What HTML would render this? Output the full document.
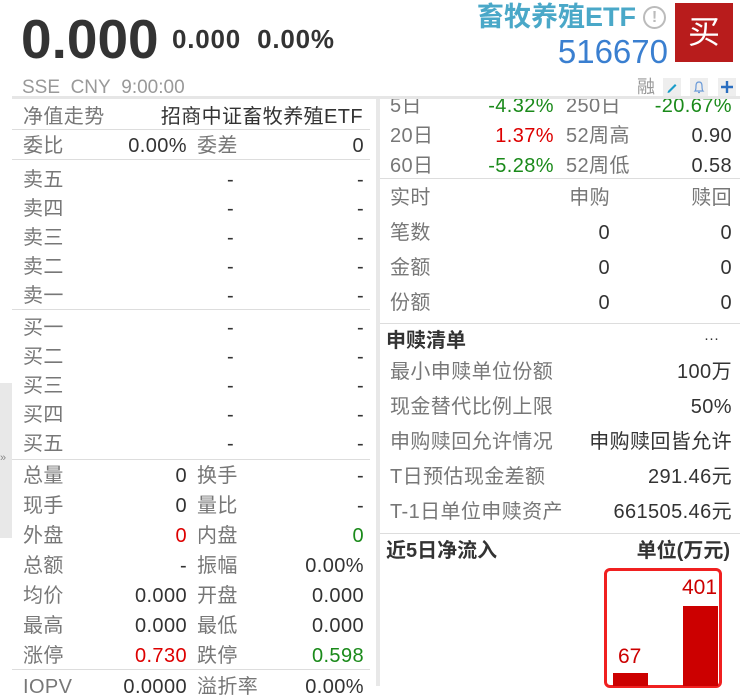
<!DOCTYPE html>
<html><head><meta charset="utf-8"><style>
*{margin:0;padding:0;box-sizing:border-box}
body{width:740px;height:686px;overflow:hidden;background:#fff;font-family:"Liberation Sans","Noto Sans CJK SC",sans-serif;color:#333;position:relative}
.a{position:absolute;white-space:nowrap}
.r{position:absolute;height:26px;line-height:26px;font-size:20px;white-space:nowrap;letter-spacing:0.4px}
.l{color:#777}
.g{color:#1a8a1a}.red{color:#d00}
.hl{position:absolute;height:1px;background:#ddd}
.z{z-index:3}
</style></head><body>
<div class="a" style="left:21px;top:8px;font-size:55px;font-weight:bold;color:#333;line-height:62px">0.000</div>
<div class="a" style="left:172px;top:24px;font-size:26px;font-weight:bold;line-height:30px;letter-spacing:0.8px">0.000&nbsp;&nbsp;0.00%</div>
<div class="a" style="left:22px;top:77px;font-size:19px;color:#999;line-height:21px">SSE&nbsp;&nbsp;CNY&nbsp;&nbsp;9:00:00</div>
<div class="a" style="right:104px;top:1px;font-size:27px;font-weight:bold;color:#4aa8c8;line-height:32px">畜牧养殖ETF</div>
<div class="a" style="left:643px;top:6px;width:23px;height:23px;border:2px solid #bbb;border-radius:50%;color:#bbb;font-size:16px;font-weight:bold;text-align:center;line-height:19px">!</div>
<div class="a" style="left:675px;top:3px;width:58px;height:59px;background:#b81c1c;color:#fff;font-size:32px;text-align:center;line-height:59px">买</div>
<div class="a z" style="right:72px;top:33px;font-size:33px;color:#3a7fd0;line-height:38px">516670</div>

<div class="a" style="left:380px;top:72px;width:360px;height:27px;background:#fff;z-index:2"></div>
<div class="a z" style="left:637px;top:77px;font-size:18px;color:#999;line-height:20px">融</div>
<div class="a z" style="left:663px;top:78px;width:18px;height:18px;background:#eee"><svg width="18" height="18"><path d="M5 13 L12 6 L13.5 7.5 L6.5 14.5 L4.5 15 Z" fill="#1a9cc9"/></svg></div>
<div class="a z" style="left:690px;top:78px;width:18px;height:18px;background:#eee"><svg width="18" height="18"><path d="M5 13 Q6 12 6 8 Q6 4 9 4 Q12 4 12 8 Q12 12 13 13 Z M8 14.5 h2" fill="none" stroke="#6a9ad8" stroke-width="1.2"/></svg></div>
<div class="a z" style="left:718px;top:78px;width:18px;height:18px;background:#eee"><svg width="18" height="18"><path d="M9 3v12M3 9h12" stroke="#2a6ec0" stroke-width="2.4"/></svg></div>
<div class="hl z" style="left:12px;top:96px;width:728px;height:3px;background:#e6e6e6"></div>
<div class="a" style="left:376px;top:99px;width:4px;height:587px;background:#e8e8e8"></div>
<div class="a" style="left:0;top:383px;width:12px;height:155px;background:#e8e8e8"></div>
<div class="a" style="left:0px;top:452px;font-size:11px;color:#888">»</div>

<div class="r" style="left:23px;top:104px;width:340px"><span class="l">净值走势</span><span style="position:absolute;right:0">招商中证畜牧养殖ETF</span></div>
<div class="hl" style="left:12px;top:129px;width:358px"></div>
<div class="hl" style="left:12px;top:159px;width:358px"></div>
<div class="hl" style="left:12px;top:309px;width:358px"></div>
<div class="hl" style="left:12px;top:459px;width:358px"></div>
<div class="hl" style="left:12px;top:669px;width:358px"></div>

<div class="hl" style="left:380px;top:178px;width:360px"></div>
<div class="hl" style="left:380px;top:323px;width:360px"></div>
<div class="hl" style="left:380px;top:533px;width:360px"></div>
<div class="a" style="left:386px;top:329px;font-size:20px;font-weight:bold;line-height:24px">申赎清单</div>
<div class="a" style="left:704px;top:329px;font-size:15px;line-height:20px">···</div>
<div class="a" style="left:386px;top:539px;font-size:20px;font-weight:bold;line-height:24px">近5日净流入</div>
<div class="a" style="right:10px;top:539px;font-size:20px;font-weight:bold;line-height:24px">单位(万元)</div>
<div class="a" style="left:604px;top:568px;width:118px;height:120px;border:3px solid #f02020;border-radius:6px"></div>
<div class="a" style="left:613px;top:673px;width:35px;height:13px;background:#c00"></div>
<div class="a" style="left:683px;top:606px;width:35px;height:80px;background:#c00"></div>
<div class="a" style="left:618px;top:645px;font-size:21px;color:#c00;line-height:24px">67</div>
<div class="a" style="left:682px;top:576px;font-size:21px;color:#c00;line-height:24px">401</div>
<script>
function row(x,t,cells){var d=document.createElement('div');d.className='r';d.style.left=x+'px';d.style.top=(t-13)+'px';d.style.width='1px';
cells.forEach(function(c){var s=document.createElement('span');s.style.position='absolute';s.textContent=c[0];if(c[2])s.className=c[2];
if(c[3])s.style.right=(-c[1])+'px';else s.style.left=c[1]+'px';d.appendChild(s)});document.body.appendChild(d)}
var L=[[146,'委比','0.00%','委差','0'],[180,'卖五','-','','-'],[209,'卖四','-','','-'],[238,'卖三','-','','-'],[267,'卖二','-','','-'],[296,'卖一','-','','-'],
[328,'买一','-','','-'],[357,'买二','-','','-'],[386,'买三','-','','-'],[415,'买四','-','','-'],[444,'买五','-','','-'],
[476,'总量','0','换手','-'],[506,'现手','0','量比','-'],[536,'外盘','0','内盘','0','red','g'],[566,'总额','-','振幅','0.00%'],
[596,'均价','0.000','开盘','0.000'],[626,'最高','0.000','最低','0.000'],[656,'涨停','0.730','跌停','0.598','red','g'],[687,'IOPV','0.0000','溢折率','0.00%']];
L.forEach(function(a){var r=a[0]>170&&a[0]<450;row(0,a[0],[[a[1],23,'l'],[a[2],r?233:186,a[5]||'',1],[a[3],197,'l'],[a[4],363,a[6]||'',1]])});
var R=[[106,'5日','-4.32%','250日','-20.67%','g','g'],[136,'20日','1.37%','52周高','0.90','red'],[166,'60日','-5.28%','52周低','0.58','g'],
[198,'实时','申购','','赎回','l','l'],[233,'笔数','0','','0'],[268,'金额','0','','0'],[303,'份额','0','','0']];
R.forEach(function(a){var s=a[0]>190;row(0,a[0],[[a[1],390,'l'],[a[2],s?609:553,a[5]||'',1],[a[3],566,'l'],[a[4],731,a[6]||'',1]])});
var S=[[372,'最小申赎单位份额','100万'],[407,'现金替代比例上限','50%'],[442,'申购赎回允许情况','申购赎回皆允许'],[477,'T日预估现金差额','291.46元'],[512,'T-1日单位申赎资产','661505.46元']];
S.forEach(function(a){row(0,a[0],[[a[1],390,'l'],[a[2],731,'',1]])});
</script>
</body></html>
